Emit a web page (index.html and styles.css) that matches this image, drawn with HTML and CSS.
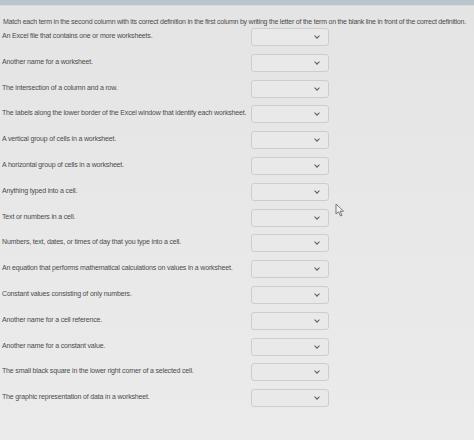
FILE: index.html
```html
<!DOCTYPE html>
<html>
<head>
<meta charset="utf-8">
<link rel="stylesheet" href="styles.css">
</head>
<body>
<div class="topbar"></div>
<div class="content">
  <p class="instr">Match each term in the second column with its correct definition in the first column by writing the letter of the term on the blank line in front of the correct definition.</p>
  <div class="rows">
    <div class="row"><span class="label">An Excel file that contains one or more worksheets.</span><span class="select"><i class="chev"></i></span></div>
    <div class="row"><span class="label">Another name for a worksheet.</span><span class="select"><i class="chev"></i></span></div>
    <div class="row"><span class="label">The intersection of a column and a row.</span><span class="select"><i class="chev"></i></span></div>
    <div class="row"><span class="label">The labels along the lower border of the Excel window that identify each worksheet.</span><span class="select"><i class="chev"></i></span></div>
    <div class="row"><span class="label">A vertical group of cells in a worksheet.</span><span class="select"><i class="chev"></i></span></div>
    <div class="row"><span class="label">A horizontal group of cells in a worksheet.</span><span class="select"><i class="chev"></i></span></div>
    <div class="row"><span class="label">Anything typed into a cell.</span><span class="select"><i class="chev"></i></span></div>
    <div class="row"><span class="label">Text or numbers in a cell.</span><span class="select"><i class="chev"></i></span></div>
    <div class="row"><span class="label">Numbers, text, dates, or times of day that you type into a cell.</span><span class="select"><i class="chev"></i></span></div>
    <div class="row"><span class="label">An equation that performs mathematical calculations on values in a worksheet.</span><span class="select"><i class="chev"></i></span></div>
    <div class="row"><span class="label">Constant values consisting of only numbers.</span><span class="select"><i class="chev"></i></span></div>
    <div class="row"><span class="label">Another name for a cell reference.</span><span class="select"><i class="chev"></i></span></div>
    <div class="row"><span class="label">Another name for a constant value.</span><span class="select"><i class="chev"></i></span></div>
    <div class="row"><span class="label">The small black square in the lower right corner of a selected cell.</span><span class="select"><i class="chev"></i></span></div>
    <div class="row"><span class="label">The graphic representation of data in a worksheet.</span><span class="select"><i class="chev"></i></span></div>
  </div>
</div>
<svg class="cursor" width="10" height="14" viewBox="0 0 10 14"><path d="M1 1 L1 11 L3.5 8.8 L5.5 13 L7 12.3 L5 8.2 L8.5 8.2 Z" fill="#f2f2f2" stroke="#6a6a6a" stroke-width="0.9" stroke-linejoin="round"/></svg>
</body>
</html>
```
FILE: styles.css
```css
html, body {
  margin: 0;
  padding: 0;
}
body {
  width: 474px;
  height: 440px;
  overflow: hidden;
  position: relative;
  background: linear-gradient(180deg, #e4e4e4 0%, #e8e8e8 50%, #ebebeb 100%);
  font-family: "Liberation Sans", Arial, sans-serif;
  color: #4c4c4c;
}
.topbar {
  height: 5px;
  background: #b9c5ca;
  border-bottom: 1px solid #d6dbdd;
}
.content {
  padding: 11px 0 0 2px;
}
.instr {
  margin: 0;
  font-size: 7px;
  line-height: 9px;
  white-space: nowrap;
  letter-spacing: -0.22px;
  padding-left: 1px;
}
.rows {
  margin-top: 2px;
  display: flex;
  flex-direction: column;
  gap: 7.8px;
}
.row {
  display: grid;
  grid-template-columns: 249px 78px;
  height: 18px;
}
.label {
  font-size: 7px;
  line-height: 9px;
  padding-top: 3px;
  white-space: nowrap;
  letter-spacing: -0.17px;
}
.select {
  position: relative;
  box-sizing: border-box;
  height: 18px;
  border: 1px solid #cdcdcd;
  border-radius: 3px;
  background: #e9e9e9;
}
.chev {
  position: absolute;
  right: 9px;
  top: 5px;
  width: 3px;
  height: 3px;
  border-right: 1.3px solid #5a5a5a;
  border-bottom: 1.3px solid #5a5a5a;
  transform: rotate(45deg);
}
.cursor {
  position: absolute;
  left: 335px;
  top: 203px;
}
```
